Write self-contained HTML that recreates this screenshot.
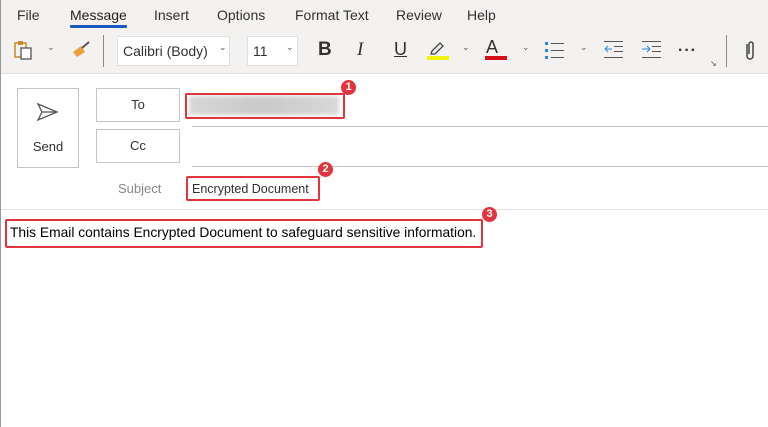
<!DOCTYPE html>
<html><head><style>
body{margin:0;width:768px;height:427px;overflow:hidden;background:#fff;font-family:"Liberation Sans",sans-serif;position:relative;}
.abs{position:absolute}
.rib{left:0;top:0;width:768px;height:73px;background:#f3f2f1;border-bottom:1px solid #e1dfdd}
.tab{top:7px;font-size:14px;color:#323130}
.btn{background:#fff;border:1px solid #c8c6c4;box-sizing:border-box;font-size:13px;color:#323130;text-align:center}
.red{border:2px solid #e2343c;box-sizing:border-box;border-radius:2px}
.num{width:15px;height:15px;border-radius:50%;background:#e2343c;color:#fff;font-size:11px;font-weight:bold;text-align:center;line-height:15px}
.chev{font-size:9px;color:#555;top:42px}
</style></head><body>
<div class="abs" style="left:0;top:0;width:1px;height:427px;background:#999;z-index:5"></div>
<div class="abs rib"></div>
<div class="abs tab" style="left:17px">File</div>
<div class="abs tab" style="left:70px;color:#201f1e">Message</div>
<div class="abs" style="left:70px;top:25px;width:57px;height:3px;background:#185abd;border-radius:1px"></div>
<div class="abs tab" style="left:154px">Insert</div>
<div class="abs tab" style="left:217px">Options</div>
<div class="abs tab" style="left:295px">Format Text</div>
<div class="abs tab" style="left:396px">Review</div>
<div class="abs tab" style="left:467px">Help</div>
<svg class="abs" style="left:14px;top:40px" width="20" height="20"><rect x="1" y="3" width="11" height="14" fill="none" stroke="#c68a2d" stroke-width="1.5"/><rect x="7" y="8" width="10" height="11" fill="#fff" stroke="#555" stroke-width="1.3"/><rect x="4" y="1" width="5" height="4" fill="#c68a2d"/></svg>
<div class="abs chev" style="left:47px">&#8964;</div>
<svg class="abs" style="left:70px;top:40px" width="22" height="20"><path d="M3 12 L11 6 L15 12 L7 17Z" fill="#e8a33d"/><path d="M12 8 L19 2" stroke="#555" stroke-width="2"/></svg>
<div class="abs" style="left:103px;top:35px;width:1px;height:32px;background:#8a8886"></div>
<div class="abs btn" style="left:117px;top:36px;width:113px;height:30px;text-align:left;padding:6px 0 0 5px;font-size:14px;border-color:#e1dfdd">Calibri (Body)</div>
<div class="abs chev" style="left:219px">&#8964;</div>
<div class="abs btn" style="left:247px;top:36px;width:51px;height:30px;text-align:left;padding:6px 0 0 5px;font-size:14px;border-color:#e1dfdd">11</div>
<div class="abs chev" style="left:286px">&#8964;</div>
<div class="abs" style="left:318px;top:39px;font-size:19px;font-weight:bold;color:#323130">B</div>
<div class="abs" style="left:357px;top:39px;font-size:19px;font-style:italic;font-family:'Liberation Serif',serif;color:#323130">I</div>
<div class="abs" style="left:394px;top:39px;font-size:18px;text-decoration:underline;color:#323130">U</div>
<svg class="abs" style="left:426px;top:38px" width="24" height="24"><path d="M6 13 L14 5 L17 8 L9 16 L5 16Z" fill="none" stroke="#444" stroke-width="1.3"/><rect x="1" y="18" width="22" height="4" fill="#f2f20f"/></svg>
<div class="abs chev" style="left:462px">&#8964;</div>
<div class="abs" style="left:486px;top:37px;font-size:18px;color:#323130">A</div>
<div class="abs" style="left:485px;top:56px;width:22px;height:4px;background:#d40f18"></div>
<div class="abs chev" style="left:522px">&#8964;</div>
<svg class="abs" style="left:544px;top:40px" width="22" height="20"><g fill="#2b88d8"><rect x="1" y="2" width="3" height="3"/><rect x="1" y="9" width="3" height="3"/><rect x="1" y="16" width="3" height="3"/></g><g stroke="#555"><path d="M7 3.5H20M7 10.5H20M7 17.5H20"/></g></svg>
<div class="abs chev" style="left:580px">&#8964;</div>
<svg class="abs" style="left:602px;top:40px" width="22" height="20"><path d="M2 1.5H21M12 6.5H21M12 11.5H21M2 17.5H21" stroke="#555"/><path d="M3 9H10M3 9L6 6M3 9L6 12" stroke="#2b88d8" fill="none"/></svg>
<svg class="abs" style="left:640px;top:40px" width="22" height="20"><path d="M2 1.5H21M12 6.5H21M12 11.5H21M2 17.5H21" stroke="#555"/><path d="M2 9H10M10 9L7 6M10 9L7 12" stroke="#2b88d8" fill="none"/></svg>
<div class="abs" style="left:678px;top:42px;font-size:16px;font-weight:bold;color:#323130;letter-spacing:1px">&middot;&middot;&middot;</div>
<div class="abs" style="left:710px;top:59px;font-size:8px;color:#555">&#8600;</div>
<div class="abs" style="left:726px;top:35px;width:1px;height:32px;background:#8a8886"></div>
<svg class="abs" style="left:742px;top:39px" width="16" height="24"><path d="M5 5 V17 A3 3 0 0 0 11 17 V5 A2 2 0 0 0 7 5 V15" fill="none" stroke="#444" stroke-width="1.5"/></svg>
<div class="abs btn" style="left:17px;top:88px;width:62px;height:80px;padding-top:50px">Send</div>
<svg class="abs" style="left:36px;top:102px" width="24" height="20"><path d="M2 2 L21 10 L2 18 L6 10Z M6 10 H21" fill="none" stroke="#555" stroke-width="1.3"/></svg>
<div class="abs btn" style="left:96px;top:88px;width:84px;height:34px;line-height:32px">To</div>
<div class="abs btn" style="left:96px;top:129px;width:84px;height:34px;line-height:32px">Cc</div>
<div class="abs" style="left:192px;top:126px;width:576px;height:1px;background:#c8c6c4"></div>
<div class="abs" style="left:192px;top:166px;width:576px;height:1px;background:#c8c6c4"></div>
<div class="abs" style="left:189px;top:96px;width:150px;height:19px;background:linear-gradient(90deg,#d6d6d6,#c9c9c9 50%,#d8d8d8);filter:blur(2px)"></div>
<div class="abs red" style="left:185px;top:93px;width:160px;height:26px"></div>
<div class="abs num" style="left:341px;top:80px">1</div>
<div class="abs" style="left:118px;top:181px;font-size:13px;color:#8a8886">Subject</div>
<div class="abs" style="left:192px;top:182px;font-size:12.5px;color:#323130">Encrypted Document</div>
<div class="abs red" style="left:186px;top:176px;width:134px;height:25px"></div>
<div class="abs num" style="left:318px;top:162px">2</div>
<div class="abs" style="left:0;top:209px;width:768px;height:1px;background:#e1dfdd"></div>
<div class="abs" style="left:10px;top:225px;font-size:13.8px;color:#000">This Email contains Encrypted Document to safeguard sensitive information.</div>
<div class="abs red" style="left:5px;top:219px;width:478px;height:29px"></div>
<div class="abs num" style="left:482px;top:207px">3</div>
</body></html>
